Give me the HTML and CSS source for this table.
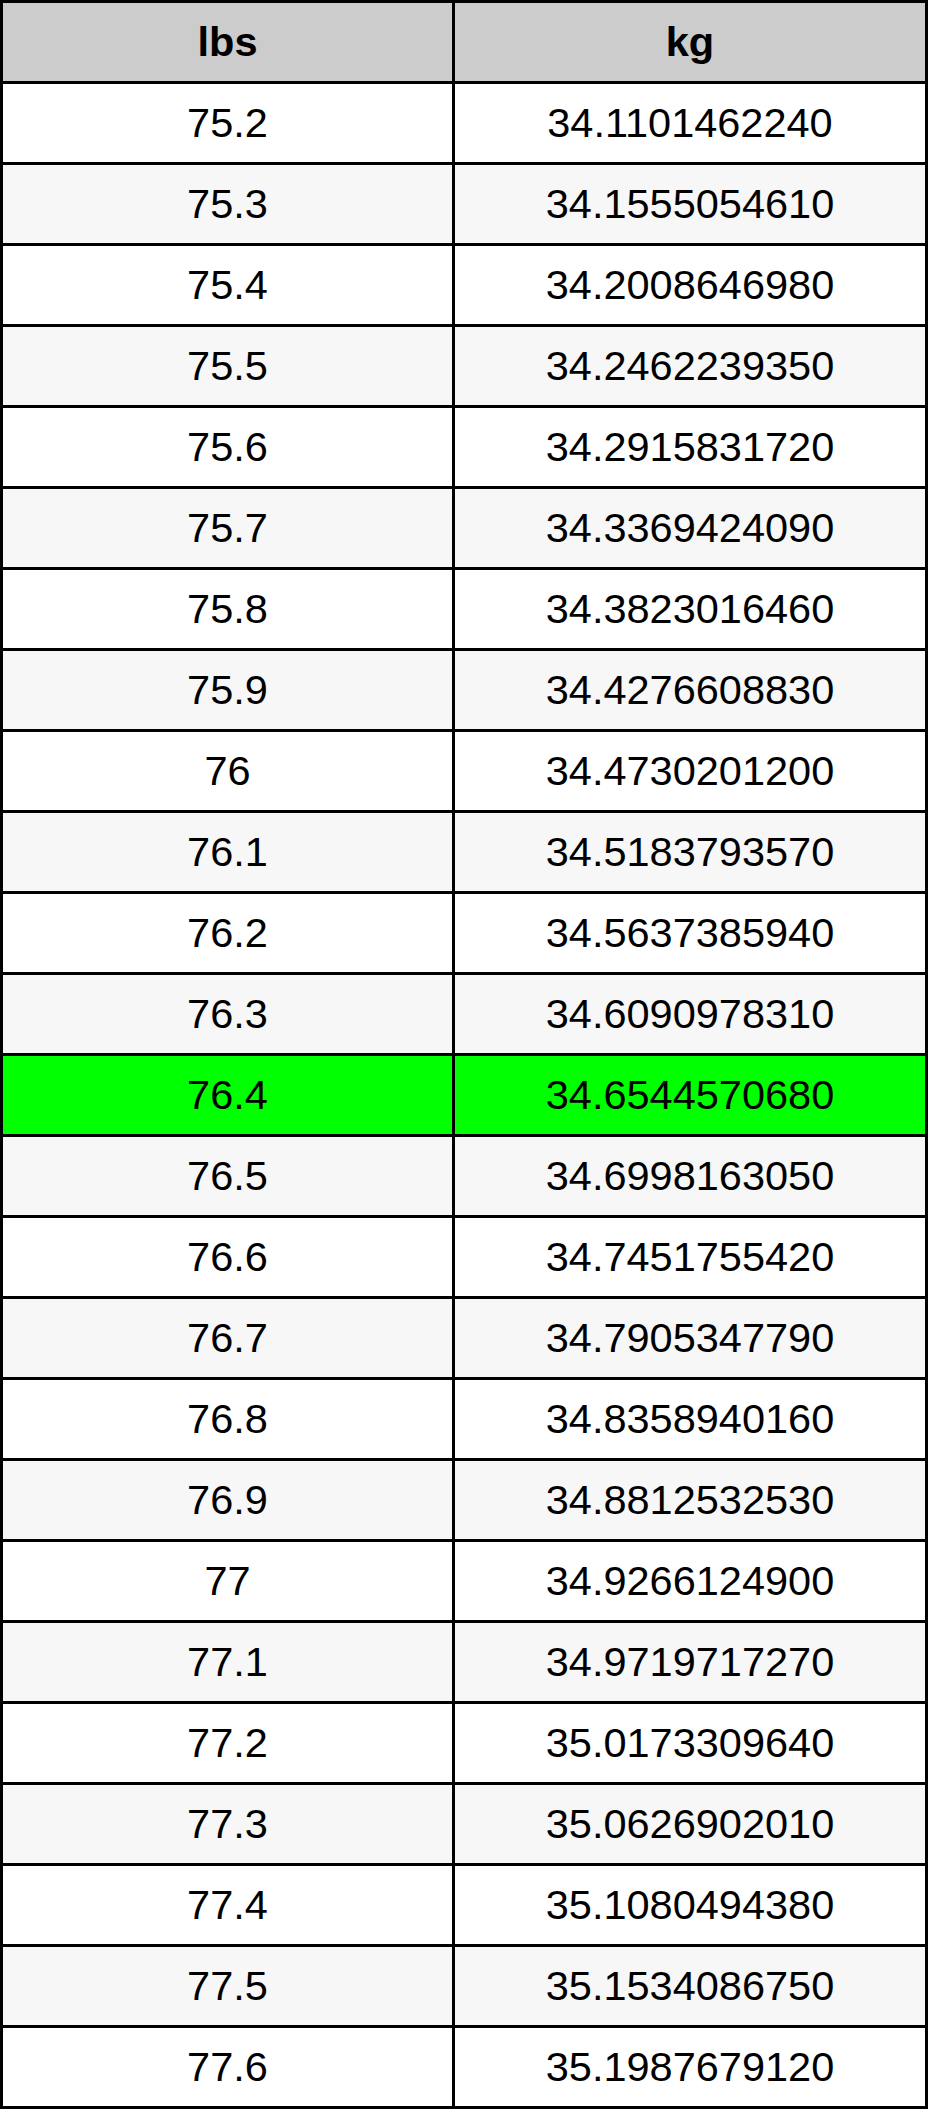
FILE: index.html
```html
<!DOCTYPE html>
<html>
<head>
<meta charset="utf-8">
<title>lbs to kg</title>
<link rel="stylesheet" href="styles.css">
</head>
<body>
<table class="conv">
<colgroup><col class="c-lbs"><col class="c-kg"></colgroup>
<thead>
<tr><th>lbs</th><th>kg</th></tr>
</thead>
<tbody>
<tr><td>75.2</td><td>34.1101462240</td></tr>
<tr><td>75.3</td><td>34.1555054610</td></tr>
<tr><td>75.4</td><td>34.2008646980</td></tr>
<tr><td>75.5</td><td>34.2462239350</td></tr>
<tr><td>75.6</td><td>34.2915831720</td></tr>
<tr><td>75.7</td><td>34.3369424090</td></tr>
<tr><td>75.8</td><td>34.3823016460</td></tr>
<tr><td>75.9</td><td>34.4276608830</td></tr>
<tr><td>76</td><td>34.4730201200</td></tr>
<tr><td>76.1</td><td>34.5183793570</td></tr>
<tr><td>76.2</td><td>34.5637385940</td></tr>
<tr><td>76.3</td><td>34.6090978310</td></tr>
<tr class="hl"><td>76.4</td><td>34.6544570680</td></tr>
<tr><td>76.5</td><td>34.6998163050</td></tr>
<tr><td>76.6</td><td>34.7451755420</td></tr>
<tr><td>76.7</td><td>34.7905347790</td></tr>
<tr><td>76.8</td><td>34.8358940160</td></tr>
<tr><td>76.9</td><td>34.8812532530</td></tr>
<tr><td>77</td><td>34.9266124900</td></tr>
<tr><td>77.1</td><td>34.9719717270</td></tr>
<tr><td>77.2</td><td>35.0173309640</td></tr>
<tr><td>77.3</td><td>35.0626902010</td></tr>
<tr><td>77.4</td><td>35.1080494380</td></tr>
<tr><td>77.5</td><td>35.1534086750</td></tr>
<tr><td>77.6</td><td>35.1987679120</td></tr>
</tbody>
</table>
</body>
</html>
```
FILE: styles.css
```css
html, body {
  margin: 0;
  padding: 0;
  background: #ffffff;
}
.conv {
  width: 928px;
  table-layout: fixed;
  border-collapse: separate;
  border-spacing: 3px;
  background: #000000;
  font-family: "Liberation Sans", Arial, sans-serif;
  font-size: 41.5px;
  color: #000000;
}
.c-lbs { width: 449px; }
.c-kg { width: 470px; }
.conv th,
.conv td {
  height: 78px;
  padding: 0;
  text-align: center;
  vertical-align: middle;
  line-height: 1;
}
.conv th {
  background: #cccccc;
  font-weight: bold;
}
.conv tbody tr:nth-child(odd) td { background: #ffffff; }
.conv tbody tr:nth-child(even) td { background: #f7f7f7; }
.conv tbody tr.hl td { background: #00ff00; }
```
